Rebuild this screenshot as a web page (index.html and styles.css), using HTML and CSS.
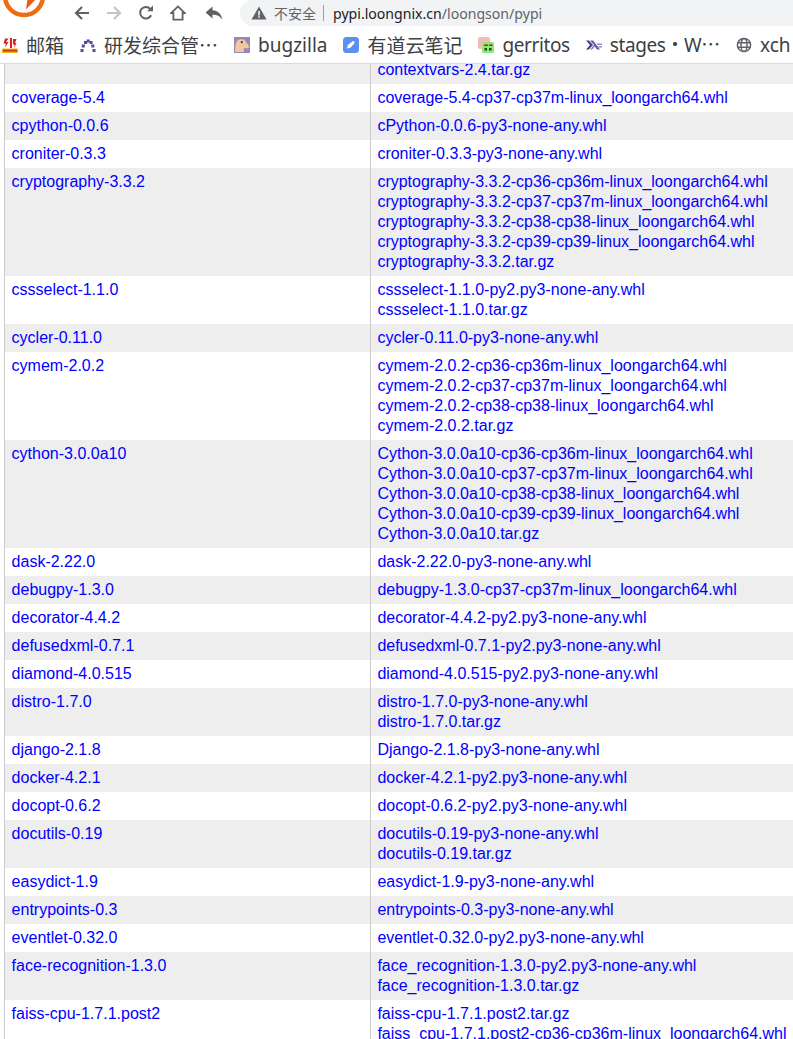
FILE: index.html
```html
<!DOCTYPE html>
<html lang="zh">
<head>
<meta charset="utf-8">
<title>pypi</title>
<link rel="stylesheet" href="styles.css">
</head>
<body>
<header class="chrome">
  <div class="toolbar">
    <svg class="logo" viewBox="0 0 48 27" aria-hidden="true">
      <circle cx="24" cy="-4" r="19" fill="none" stroke="#ee6c12" stroke-width="4.400"/>
      <path d="M36 -1 L26 9.500 L27.500 -1 Z" fill="#ea5a18"/>
    </svg>
    <svg class="nav nav-back" viewBox="0 0 16 16" aria-hidden="true"><path d="M15 8H2M8 2L2 8l6 6" fill="none" stroke="#5f6368" stroke-width="2.200"/></svg>
    <svg class="nav nav-fwd" viewBox="0 0 16 16" aria-hidden="true"><path d="M1 8h13M8 2l6 6-6 6" fill="none" stroke="#c2c4c7" stroke-width="2.200"/></svg>
    <svg class="nav nav-reload" viewBox="0 0 16 16" aria-hidden="true"><path d="M13.200 10.200A5.800 5.800 0 1 1 12.200 3.700" fill="none" stroke="#5f6368" stroke-width="2"/><path d="M9.200 6.300H15V.6Z" fill="#5f6368"/></svg>
    <svg class="nav nav-home" viewBox="0 0 16 16" aria-hidden="true"><path d="M8 1.400L1.200 8H3.400V14.600H12.600V8H14.800Z" fill="none" stroke="#5f6368" stroke-width="1.800"/></svg>
    <svg class="nav nav-reply" viewBox="0 0 18 16" aria-hidden="true"><path d="M7.500 1.500L.5 7.500l7 6V9.800C12 9.800 15 11 17.500 15 16.500 9 13 5.500 7.500 5.200Z" fill="#5f6368"/></svg>
    <div class="omnibox">
      <svg class="warn" viewBox="0 0 16 14" aria-hidden="true"><path d="M8 .6L15.500 13.600H.5Z" fill="#5f6368"/><path d="M7.200 5H8.800V9.500H7.200ZM7.200 10.300H8.800V11.800H7.200Z" fill="#f1f3f4"/></svg>
      <span class="insecure">不安全</span>
      <span class="sep"></span>
      <span class="url">pypi.loongnix.cn<span class="path">/loongson/pypi</span></span>
    </div>
  </div>
  <nav class="bookmarks">
    <a class="bm">
      <svg class="bm-icon" viewBox="0 0 16 16" aria-hidden="true"><rect width="16" height="16" fill="#fff"/><rect y="11.500" width="16" height="4.500" fill="#f2b807"/><rect x="1" y="12.600" width="14" height="2" fill="#d6331a"/><path d="M3 1.500h3.500L4 5h2.500L3 10.500 3.800 6.500H1.500ZM8 1h2V11H8ZM11 2h3.500L13 6h1.500L12 11 12.500 7.500H11Z" fill="#d9201c"/></svg>
      <span class="cjk">邮箱</span>
    </a>
    <a class="bm">
      <svg class="bm-icon" viewBox="0 0 16 16" aria-hidden="true"><g fill="#5b46a4"><rect x="0.500" y="12" width="3" height="3"/><rect x="1.800" y="7.500" width="3" height="3"/><rect x="4" y="4" width="3" height="3"/><rect x="6.700" y="2.500" width="3" height="3"/><rect x="9.500" y="4" width="3" height="3"/><rect x="11.300" y="7.500" width="3" height="3"/><rect x="12.500" y="12" width="3" height="3"/></g></svg>
      <span class="cjk">研发综合管…</span>
    </a>
    <a class="bm">
      <svg class="bm-icon" viewBox="0 0 16 16" aria-hidden="true"><rect width="16" height="16" fill="#9b86b8"/><path d="M1 15C1 10 1.500 6 3 4 5 1.500 10 1.500 11.500 4 12.500 6 15 8 15 10 15 11 13 12 10 11 9.500 13 10 14 10 15Z" fill="#efc9a0"/><circle cx="7.800" cy="5.200" r="1.100" fill="#4a3a2a"/></svg>
      <span>bugzilla</span>
    </a>
    <a class="bm">
      <svg class="bm-icon" viewBox="0 0 16 16" aria-hidden="true"><rect width="16" height="16" rx="3.500" fill="#5b8ff2"/><path d="M4 11.500L4.800 8 9.500 4.200C10.500 3.600 12 5 11.500 6L7.500 10.800Z" fill="#fff"/></svg>
      <span class="cjk">有道云笔记</span>
    </a>
    <a class="bm">
      <svg class="bm-icon" viewBox="0 0 16 16" aria-hidden="true"><rect width="12" height="12" rx="2" fill="#f7b9b5"/><rect x="4" y="5" width="12" height="11" rx="1.500" fill="#8fe67a"/><path d="M6 7.500h4V9H6ZM11 7.500h3.500V9H11Z" fill="#c0201c"/><path d="M6.500 11h2.500v2.500H6.500ZM11 11h2.500v2.500H11Z" fill="#1d4d16"/></svg>
      <span class="tight">gerritos</span>
    </a>
    <a class="bm">
      <svg class="bm-icon" viewBox="0 0 16 16" aria-hidden="true"><path d="M0 3.500h3L7 8l-4 4.500H0L4 8Z" fill="#4f3f86"/><path d="M4 3.500h3l7 9h-3L8.500 9.300 6 12.500H4.500L8 8Z" fill="#6d5aa5"/><path d="M11 6.500h5V8h-5ZM12.500 9h3.500v1.500h-3.500Z" fill="#9a88c8"/></svg>
      <span class="tight">stages<span class="cjk">·</span>W<span class="cjk">…</span></span>
    </a>
    <a class="bm">
      <svg class="bm-icon" viewBox="0 0 16 16" aria-hidden="true"><g fill="none" stroke="#5f6368" stroke-width="1.500"><circle cx="8" cy="8" r="6.600"/><ellipse cx="8" cy="8" rx="3" ry="6.600"/><path d="M1.500 5.700h13M1.500 10.300h13"/></g></svg>
      <span>xch</span>
    </a>
  </nav>
</header>
<main class="viewport">
<table class="packages">
<tr><td><a href="#">contextvars-2.4</a></td><td><a href="#">contextvars-2.4-py3-none-any.whl</a><br><a href="#">contextvars-2.4.tar.gz</a></td></tr>
<tr><td><a href="#">coverage-5.4</a></td><td><a href="#">coverage-5.4-cp37-cp37m-linux_loongarch64.whl</a></td></tr>
<tr><td><a href="#">cpython-0.0.6</a></td><td><a href="#">cPython-0.0.6-py3-none-any.whl</a></td></tr>
<tr><td><a href="#">croniter-0.3.3</a></td><td><a href="#">croniter-0.3.3-py3-none-any.whl</a></td></tr>
<tr><td><a href="#">cryptography-3.3.2</a></td><td><a href="#">cryptography-3.3.2-cp36-cp36m-linux_loongarch64.whl</a><br><a href="#">cryptography-3.3.2-cp37-cp37m-linux_loongarch64.whl</a><br><a href="#">cryptography-3.3.2-cp38-cp38-linux_loongarch64.whl</a><br><a href="#">cryptography-3.3.2-cp39-cp39-linux_loongarch64.whl</a><br><a href="#">cryptography-3.3.2.tar.gz</a></td></tr>
<tr><td><a href="#">cssselect-1.1.0</a></td><td><a href="#">cssselect-1.1.0-py2.py3-none-any.whl</a><br><a href="#">cssselect-1.1.0.tar.gz</a></td></tr>
<tr><td><a href="#">cycler-0.11.0</a></td><td><a href="#">cycler-0.11.0-py3-none-any.whl</a></td></tr>
<tr><td><a href="#">cymem-2.0.2</a></td><td><a href="#">cymem-2.0.2-cp36-cp36m-linux_loongarch64.whl</a><br><a href="#">cymem-2.0.2-cp37-cp37m-linux_loongarch64.whl</a><br><a href="#">cymem-2.0.2-cp38-cp38-linux_loongarch64.whl</a><br><a href="#">cymem-2.0.2.tar.gz</a></td></tr>
<tr><td><a href="#">cython-3.0.0a10</a></td><td><a href="#">Cython-3.0.0a10-cp36-cp36m-linux_loongarch64.whl</a><br><a href="#">Cython-3.0.0a10-cp37-cp37m-linux_loongarch64.whl</a><br><a href="#">Cython-3.0.0a10-cp38-cp38-linux_loongarch64.whl</a><br><a href="#">Cython-3.0.0a10-cp39-cp39-linux_loongarch64.whl</a><br><a href="#">Cython-3.0.0a10.tar.gz</a></td></tr>
<tr><td><a href="#">dask-2.22.0</a></td><td><a href="#">dask-2.22.0-py3-none-any.whl</a></td></tr>
<tr><td><a href="#">debugpy-1.3.0</a></td><td><a href="#">debugpy-1.3.0-cp37-cp37m-linux_loongarch64.whl</a></td></tr>
<tr><td><a href="#">decorator-4.4.2</a></td><td><a href="#">decorator-4.4.2-py2.py3-none-any.whl</a></td></tr>
<tr><td><a href="#">defusedxml-0.7.1</a></td><td><a href="#">defusedxml-0.7.1-py2.py3-none-any.whl</a></td></tr>
<tr><td><a href="#">diamond-4.0.515</a></td><td><a href="#">diamond-4.0.515-py2.py3-none-any.whl</a></td></tr>
<tr><td><a href="#">distro-1.7.0</a></td><td><a href="#">distro-1.7.0-py3-none-any.whl</a><br><a href="#">distro-1.7.0.tar.gz</a></td></tr>
<tr><td><a href="#">django-2.1.8</a></td><td><a href="#">Django-2.1.8-py3-none-any.whl</a></td></tr>
<tr><td><a href="#">docker-4.2.1</a></td><td><a href="#">docker-4.2.1-py2.py3-none-any.whl</a></td></tr>
<tr><td><a href="#">docopt-0.6.2</a></td><td><a href="#">docopt-0.6.2-py2.py3-none-any.whl</a></td></tr>
<tr><td><a href="#">docutils-0.19</a></td><td><a href="#">docutils-0.19-py3-none-any.whl</a><br><a href="#">docutils-0.19.tar.gz</a></td></tr>
<tr><td><a href="#">easydict-1.9</a></td><td><a href="#">easydict-1.9-py3-none-any.whl</a></td></tr>
<tr><td><a href="#">entrypoints-0.3</a></td><td><a href="#">entrypoints-0.3-py3-none-any.whl</a></td></tr>
<tr><td><a href="#">eventlet-0.32.0</a></td><td><a href="#">eventlet-0.32.0-py2.py3-none-any.whl</a></td></tr>
<tr><td><a href="#">face-recognition-1.3.0</a></td><td><a href="#">face_recognition-1.3.0-py2.py3-none-any.whl</a><br><a href="#">face_recognition-1.3.0.tar.gz</a></td></tr>
<tr><td><a href="#">faiss-cpu-1.7.1.post2</a></td><td><a href="#">faiss-cpu-1.7.1.post2.tar.gz</a><br><a href="#">faiss_cpu-1.7.1.post2-cp36-cp36m-linux_loongarch64.whl</a></td></tr>
</table>
</main>
</body>
</html>
```
FILE: styles.css
```css
html, body {
  margin: 0;
  padding: 0;
  height: 1039px;
  overflow: hidden;
  background: #fff;
}
.chrome {
  height: 64px;
  box-sizing: border-box;
  border-bottom: 1px solid #dcdcdc;
  font-family: "Noto Sans", "Noto Sans CJK SC", sans-serif;
  overflow: hidden;
}
.toolbar {
  display: flex;
  align-items: center;
  height: 26px;
}
.logo {
  width: 48px;
  height: 27px;
  flex: none;
  align-self: flex-start;
  margin-right: 26px;
}
.nav {
  flex: none;
  height: 16px;
  width: 16px;
}
.nav-fwd { margin-left: 16px; }
.nav-reload { margin-left: 16px; }
.nav-home { margin-left: 16px; }
.nav-reply { margin-left: 19px; width: 18px; }
.omnibox {
  display: flex;
  align-items: center;
  height: 26px;
  width: 560px;
  margin-left: 17px;
  padding-left: 11px;
  box-sizing: border-box;
  background: #f1f3f4;
  border-radius: 13px 0 0 13px;
  flex: none;
}
.warn {
  width: 16px;
  height: 14px;
  flex: none;
}
.insecure {
  margin-left: 7px;
  font-size: 14px;
  color: #5f6368;
  font-family: "Noto Sans CJK SC", sans-serif;
}
.sep {
  width: 1px;
  height: 16px;
  background: #9aa0a6;
  margin: 0 9px 0 7px;
}
.url {
  font-size: 14.1px;
  color: #202124;
}
.path {
  color: #5f6368;
}
.bookmarks {
  display: flex;
  align-items: center;
  gap: 16px;
  height: 37px;
  padding-left: 2px;
  white-space: nowrap;
}
.bm {
  display: flex;
  align-items: center;
  gap: 8px;
  font-size: 19px;
  line-height: 26px;
  color: #3c4043;
  flex: none;
}
.cjk {
  font-family: "Noto Sans CJK SC", sans-serif;
}
.tight {
  letter-spacing: -0.4px;
}
.bm-icon {
  width: 16px;
  height: 16px;
  flex: none;
}
.viewport {
  height: 975px;
  overflow: hidden;
  padding-left: 4px;
}
.packages {
  border-collapse: separate;
  border-spacing: 0;
  margin-top: -28px;
  width: 789px;
  table-layout: fixed;
  border-left: 1px solid #ccc;
  font: 16px/20px "Liberation Sans", Arial, sans-serif;
}
.packages td {
  padding: 4px 6.6px;
  vertical-align: top;
  white-space: nowrap;
}
.packages td:first-child {
  width: 351.6px;
  border-right: 1px solid #ccc;
}
.packages tr:nth-child(odd) td {
  background: #eee;
}
.packages a {
  color: #00f;
  text-decoration: none;
}
```
